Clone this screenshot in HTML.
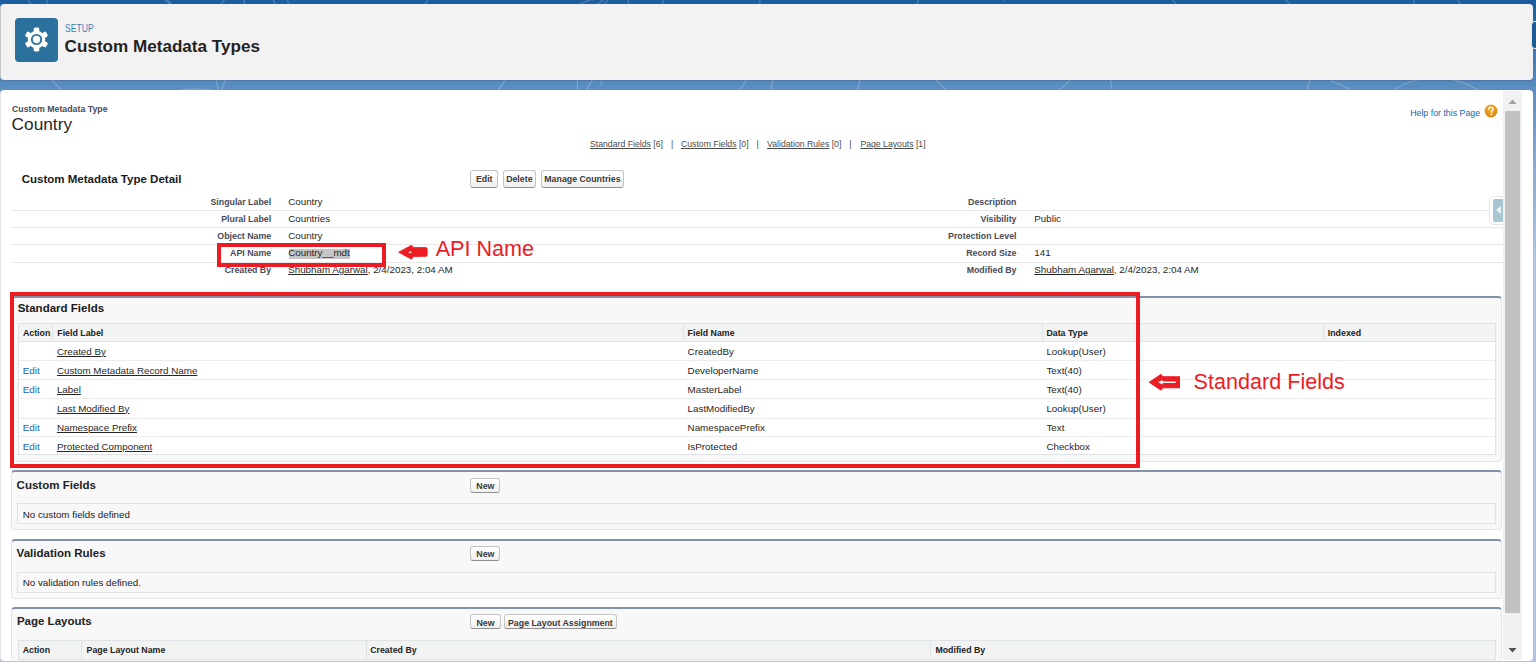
<!DOCTYPE html>
<html><head><meta charset="utf-8"><title>Custom Metadata Types</title>
<style>
html,body{margin:0;padding:0;}
body{width:1536px;height:662px;overflow:hidden;position:relative;font-family:"Liberation Sans",sans-serif;-webkit-font-smoothing:antialiased;
background:linear-gradient(to bottom,#1a5c9d 0px,#2f6cab 30px,#5b8dc0 88px,#86a9d2 160px,#b0c4df 260px,#b0c4df 662px);}
.t{position:absolute;white-space:nowrap;}
.r{position:absolute;}
u{text-decoration:underline;}
</style></head><body>
<svg class="r" style="left:0;top:0" width="1536" height="300"><g fill="none" stroke="rgba(255,255,255,0.22)" stroke-width="1.2"><path d="M572.5,5.3 A98.1,98.1 0 0 1 437.1,48.2"/><path d="M632.0,-44.9 A80.9,80.9 0 0 1 546.2,16.8"/><path d="M98.0,-117.5 A70.9,70.9 0 0 1 133.9,-72.5"/><path d="M199.9,33.6 A133.7,133.7 0 0 1 353.4,-33.4"/><path d="M1530.6,52.3 A123.0,123.0 0 0 1 1450.0,-13.6"/><path d="M194.1,113.3 A117.9,117.9 0 0 1 31.7,41.4"/><path d="M1083.4,57.2 A85.7,85.7 0 0 1 1042.5,101.0"/><path d="M261.9,176.1 A71.3,71.3 0 0 1 228.8,73.6"/><path d="M661.2,-105.4 A115.3,115.3 0 0 1 775.6,-81.1"/><path d="M881.4,-56.9 A125.0,125.0 0 0 1 1004.0,1.2"/><path d="M1570.3,-117.1 A70.2,70.2 0 0 1 1623.6,-88.8"/><path d="M765.7,-168.8 A100.2,100.2 0 0 1 854.8,-48.4"/><path d="M1308.7,-49.8 A103.4,103.4 0 0 1 1462.9,-69.8"/><path d="M571.2,177.0 A133.4,133.4 0 0 1 719.6,22.9"/><path d="M147.7,111.9 A97.7,97.7 0 0 1 -0.5,200.0"/><path d="M518.8,42.2 A100.2,100.2 0 0 1 414.8,128.1"/><path d="M230.3,-74.1 A27.1,27.1 0 0 1 249.4,-62.8"/><path d="M467.5,89.8 A124.6,124.6 0 0 1 311.4,144.7"/><path d="M934.0,77.9 A118.3,118.3 0 0 1 970.6,199.1"/><path d="M756.8,-13.0 A126.1,126.1 0 0 1 738.0,93.5"/><path d="M193.0,-10.4 A48.0,48.0 0 0 1 243.3,-63.0"/><path d="M335.7,-27.3 A70.3,70.3 0 0 1 337.3,-131.8"/><path d="M1462.0,58.3 A81.9,81.9 0 0 1 1593.7,72.7"/><path d="M118.9,91.1 A113.6,113.6 0 0 1 66.8,282.0"/><path d="M575.8,7.5 A32.4,32.4 0 0 1 597.1,-0.7"/><path d="M40.0,11.8 A39.5,39.5 0 0 1 23.5,-9.6"/><path d="M-70.7,-13.3 A32.2,32.2 0 0 1 -81.1,-30.9"/><path d="M1392.1,129.8 A37.8,37.8 0 0 1 1356.5,103.0"/><path d="M672.6,-51.3 A121.9,121.9 0 0 1 566.9,75.2"/><path d="M730.6,-29.0 A32.3,32.3 0 0 1 716.3,-59.6"/><path d="M1339.3,-41.8 A22.8,22.8 0 0 1 1323.9,-12.9"/><path d="M169.0,68.0 A23.2,23.2 0 0 1 212.2,60.8"/><path d="M1340.2,153.1 A51.3,51.3 0 0 1 1323.3,110.9"/><path d="M1169.3,168.7 A113.5,113.5 0 0 1 1110.3,74.5"/><path d="M1330.9,80.9 A122.3,122.3 0 0 1 1361.7,294.1"/><path d="M1120.3,48.3 A82.1,82.1 0 0 1 1091.3,4.1"/><path d="M-22.1,-49.5 A51.1,51.1 0 0 1 41.3,22.0"/><path d="M820.9,143.3 A138.6,138.6 0 0 1 762.0,299.5"/><path d="M326.1,25.3 A43.6,43.6 0 0 1 270.3,-13.3"/><path d="M1391.0,91.8 A77.5,77.5 0 0 1 1512.9,150.4"/><path d="M115.6,-21.6 A129.2,129.2 0 0 1 192.3,183.6"/><path d="M682.0,69.7 A114.7,114.7 0 0 1 683.5,-130.5"/><path d="M1617.6,8.3 A68.2,68.2 0 0 1 1548.5,98.8"/><path d="M262.0,-66.0 A38.1,38.1 0 0 1 232.0,-6.3"/><path d="M115.2,36.7 A137.6,137.6 0 0 1 277.8,44.5"/><path d="M876.6,-47.3 A21.7,21.7 0 0 1 853.6,-21.7"/><path d="M868.6,129.3 A72.1,72.1 0 0 1 833.9,251.9"/><path d="M301.5,45.6 A55.2,55.2 0 0 1 243.3,-14.1"/><path d="M408.1,18.1 A35.7,35.7 0 0 1 405.2,60.4"/><path d="M593.2,145.0 A128.5,128.5 0 0 1 740.6,-40.4"/><path d="M860.0,78.6 A82.8,82.8 0 0 1 779.1,151.7"/><path d="M306.5,23.4 A115.9,115.9 0 0 1 153.9,-17.4"/><path d="M1087.8,69.1 A59.1,59.1 0 0 1 1158.2,17.9"/><path d="M1244.9,36.9 A87.2,87.2 0 0 1 1165.7,-12.0"/><path d="M1229.5,-25.1 A87.4,87.4 0 0 1 1283.7,126.3"/><path d="M600.9,85.5 A80.7,80.7 0 0 1 714.3,17.9"/><path d="M768.5,41.3 A77.4,77.4 0 0 1 697.4,146.7"/><path d="M1348.6,165.2 A51.2,51.2 0 0 1 1443.8,165.0"/><path d="M1303.7,-29.3 A34.6,34.6 0 0 1 1303.8,-54.2"/><path d="M368.0,-157.6 A100.3,100.3 0 0 1 405.9,21.8"/><path d="M266.7,198.1 A99.2,99.2 0 0 1 105.7,117.2"/><path d="M1438.8,61.7 A134.3,134.3 0 0 1 1461.4,-122.5"/><path d="M1547.5,169.6 A39.4,39.4 0 0 1 1567.1,117.2"/><path d="M499.3,-82.5 A58.2,58.2 0 0 1 535.4,-77.4"/><path d="M853.3,62.7 A22.2,22.2 0 0 1 847.6,28.6"/><path d="M827.9,-196.3 A138.2,138.2 0 0 1 856.2,62.0"/><path d="M127.3,-30.0 A24.8,24.8 0 0 1 146.7,-12.4"/><path d="M217.8,-79.3 A129.4,129.4 0 0 1 293.0,31.9"/><path d="M169.2,93.2 A88.5,88.5 0 0 1 235.4,97.9"/><path d="M108.7,143.9 A71.0,71.0 0 0 1 -22.9,134.0"/></g></svg>
<div class="r" style="left:0px;top:4px;width:1533px;height:75.5px;background:#f3f2f2;border-radius:4px;border-left:1px solid #c4c4c4;box-sizing:border-box;box-shadow:0 1px 1px rgba(0,0,0,.12);"></div>
<div class="r" style="left:15px;top:18px;width:43px;height:43.5px;background:#2a729d;border-radius:4px;"></div>
<svg class="r" style="left:23.5px;top:27px" width="25" height="25" viewBox="-12.5 -12.5 25 25">
<g fill="#fff"><circle r="8.7"/>
<rect x="-2.8" y="-12" width="5.6" height="24" rx="1.6"/>
<rect x="-2.8" y="-12" width="5.6" height="24" rx="1.6" transform="rotate(60)"/>
<rect x="-2.8" y="-12" width="5.6" height="24" rx="1.6" transform="rotate(120)"/></g>
<circle r="5.6" fill="#2a729d"/><circle r="3.7" fill="#fff"/>
</svg>
<div class="t " style="left:64.60px;top:20.96px;font-size:10.8px;line-height:14px;color:#3a80ba;transform:scaleX(0.79);transform-origin:0 0;letter-spacing:0.1px;">SETUP</div>
<div class="t " style="left:64.60px;top:36.07px;font-size:17.1px;line-height:21px;font-weight:bold;color:#232323;">Custom Metadata Types</div>
<div class="r" style="left:1530.5px;top:20.5px;width:9px;height:28px;border:1.5px solid #e3e8ef;border-radius:4px;background:#1f5b93;box-sizing:border-box;"></div>
<div class="r" style="left:0px;top:90px;width:1533px;height:571px;background:#fff;border-radius:4px;border-left:1px solid #e6e6e6;box-sizing:border-box;"></div>
<div class="t " style="left:12.00px;top:104.05px;font-size:8.8px;line-height:11px;font-weight:bold;color:#4a4a56;">Custom Metadata Type</div>
<div class="t " style="left:11.60px;top:112.81px;font-size:17.28px;line-height:22px;color:#262626;">Country</div>
<div class="t " style="right:55.90px;text-align:right;top:107.95px;font-size:8.8px;line-height:11px;color:#1864b0;">Help for this Page</div>
<svg class="r" style="left:1483.5px;top:103.5px" width="14" height="14" viewBox="0 0 14 14">
<defs><radialGradient id="hg" cx="45%" cy="35%" r="65%"><stop offset="0" stop-color="#f6b23a"/><stop offset="1" stop-color="#d98208"/></radialGradient></defs>
<circle cx="7" cy="7" r="6.4" fill="url(#hg)"/>
<path d="M4.9,5.3 C4.9,3.9 5.9,3.2 7,3.2 C8.2,3.2 9.1,4 9.1,5.1 C9.1,6.3 7.6,6.6 7.5,7.9 L7.5,8.5" fill="none" stroke="#fff" stroke-width="1.3" stroke-linecap="round"/>
<circle cx="7.5" cy="10.5" r="0.9" fill="#fff"/>
</svg>
<div class="t " style="left:590.00px;top:139.19px;font-size:8.7px;line-height:11px;color:#4a4a4a;"><u>Standard Fields</u> [6]</div>
<div class="t " style="left:670.92px;top:139.19px;font-size:8.7px;line-height:11px;color:#4a4a4a;">|</div>
<div class="t " style="left:681.00px;top:139.19px;font-size:8.7px;line-height:11px;color:#4a4a4a;"><u>Custom Fields</u> [0]</div>
<div class="t " style="left:756.59px;top:139.19px;font-size:8.7px;line-height:11px;color:#4a4a4a;">|</div>
<div class="t " style="left:767.10px;top:139.19px;font-size:8.7px;line-height:11px;color:#4a4a4a;"><u>Validation Rules</u> [0]</div>
<div class="t " style="left:849.32px;top:139.19px;font-size:8.7px;line-height:11px;color:#4a4a4a;">|</div>
<div class="t " style="left:860.40px;top:139.19px;font-size:8.7px;line-height:11px;color:#4a4a4a;"><u>Page Layouts</u> [1]</div>
<div class="t " style="left:21.70px;top:171.81px;font-size:11.52px;line-height:14px;font-weight:bold;color:#1a1a1a;">Custom Metadata Type Detail</div>
<div class="r" style="left:470.20px;top:169.70px;width:28.10px;height:18.00px;border:1px solid #c4c4c4;border-bottom-color:#8f8f8f;border-radius:3px;background:linear-gradient(#ffffff,#f0f0f0);box-sizing:border-box;"></div>
<div class="t " style="left:475.94px;top:174.40px;font-size:8.8px;line-height:11px;font-weight:bold;color:#3a3a3a;">Edit</div>
<div class="r" style="left:502.60px;top:169.70px;width:33.50px;height:18.00px;border:1px solid #c4c4c4;border-bottom-color:#8f8f8f;border-radius:3px;background:linear-gradient(#ffffff,#f0f0f0);box-sizing:border-box;"></div>
<div class="t " style="left:506.14px;top:174.40px;font-size:8.8px;line-height:11px;font-weight:bold;color:#3a3a3a;">Delete</div>
<div class="r" style="left:541.30px;top:169.70px;width:82.30px;height:18.00px;border:1px solid #c4c4c4;border-bottom-color:#8f8f8f;border-radius:3px;background:linear-gradient(#ffffff,#f0f0f0);box-sizing:border-box;"></div>
<div class="t " style="left:544.31px;top:174.40px;font-size:8.8px;line-height:11px;font-weight:bold;color:#3a3a3a;">Manage Countries</div>
<div class="r" style="left:11.20px;top:210.10px;width:1491.50px;height:1.00px;background:#e7e7e7;"></div>
<div class="r" style="left:11.20px;top:227.20px;width:1491.50px;height:1.00px;background:#e7e7e7;"></div>
<div class="r" style="left:11.20px;top:244.30px;width:1491.50px;height:1.00px;background:#e7e7e7;"></div>
<div class="r" style="left:11.20px;top:261.70px;width:1491.50px;height:1.00px;background:#e7e7e7;"></div>
<div class="r" style="left:288.50px;top:248.90px;width:61.50px;height:9.80px;background:#c5c5c5;"></div>
<div class="t " style="right:1264.90px;text-align:right;top:196.55px;font-size:8.8px;line-height:11px;font-weight:bold;color:#4a4a56;">Singular Label</div>
<div class="t " style="right:519.50px;text-align:right;top:196.55px;font-size:8.8px;line-height:11px;font-weight:bold;color:#4a4a56;">Description</div>
<div class="t " style="left:288.20px;top:195.70px;font-size:9.8px;line-height:12px;color:#262626;">Country</div>
<div class="t " style="right:1264.90px;text-align:right;top:213.75px;font-size:8.8px;line-height:11px;font-weight:bold;color:#4a4a56;">Plural Label</div>
<div class="t " style="right:519.50px;text-align:right;top:213.75px;font-size:8.8px;line-height:11px;font-weight:bold;color:#4a4a56;">Visibility</div>
<div class="t " style="left:288.20px;top:212.90px;font-size:9.8px;line-height:12px;color:#262626;">Countries</div>
<div class="t " style="left:1034.30px;top:212.90px;font-size:9.8px;line-height:12px;color:#262626;">Public</div>
<div class="t " style="right:1264.90px;text-align:right;top:230.85px;font-size:8.8px;line-height:11px;font-weight:bold;color:#4a4a56;">Object Name</div>
<div class="t " style="right:519.50px;text-align:right;top:230.85px;font-size:8.8px;line-height:11px;font-weight:bold;color:#4a4a56;">Protection Level</div>
<div class="t " style="left:288.20px;top:230.00px;font-size:9.8px;line-height:12px;color:#262626;">Country</div>
<div class="t " style="right:1264.90px;text-align:right;top:247.75px;font-size:8.8px;line-height:11px;font-weight:bold;color:#4a4a56;">API Name</div>
<div class="t " style="right:519.50px;text-align:right;top:247.75px;font-size:8.8px;line-height:11px;font-weight:bold;color:#4a4a56;">Record Size</div>
<div class="t " style="left:288.20px;top:246.90px;font-size:9.8px;line-height:12px;color:#262626;">Country__mdt</div>
<div class="t " style="left:1034.30px;top:246.90px;font-size:9.8px;line-height:12px;color:#262626;">141</div>
<div class="t " style="right:1264.90px;text-align:right;top:264.65px;font-size:8.8px;line-height:11px;font-weight:bold;color:#4a4a56;">Created By</div>
<div class="t " style="right:519.50px;text-align:right;top:264.65px;font-size:8.8px;line-height:11px;font-weight:bold;color:#4a4a56;">Modified By</div>
<div class="t " style="left:288.20px;top:263.80px;font-size:9.8px;line-height:12px;color:#262626;"><u>Shubham Agarwal</u>, 2/4/2023, 2:04 AM</div>
<div class="t " style="left:1034.30px;top:263.80px;font-size:9.8px;line-height:12px;color:#262626;"><u>Shubham Agarwal</u>, 2/4/2023, 2:04 AM</div>
<div class="r" style="left:1489px;top:195.5px;width:16px;height:29px;background:#fff;border:1px solid #e3e6ea;border-radius:5px 0 0 5px;box-sizing:border-box;"></div>
<div class="r" style="left:1493px;top:199px;width:10px;height:23px;background:#a7c6d3;border-radius:2px 0 0 2px;"></div>
<svg class="r" style="left:1495px;top:205px" width="8" height="10"><path d="M1,5 L6,1 L6,9 Z" fill="#eef4f7"/></svg>
<div class="r" style="left:11.3px;top:296.00px;width:1490.70px;height:166.20px;background:#f8f8f8;border:1px solid #e4e4e4;border-top:2px solid #8391ab;border-radius:4px;box-sizing:border-box;"></div>
<div class="t " style="left:17.70px;top:300.81px;font-size:11.52px;line-height:14px;font-weight:bold;color:#1a1a1a;">Standard Fields</div>
<div class="r" style="left:18.00px;top:323.00px;width:1478.00px;height:131.90px;background:#fff;border:1px solid #e0e3e5;box-sizing:border-box;"></div>
<div class="r" style="left:18.00px;top:323.00px;width:1478.00px;height:19.20px;background:#f2f3f3;border:1px solid #e0e3e5;box-sizing:border-box;"></div>
<div class="r" style="left:52.20px;top:324.00px;width:1.00px;height:17.20px;background:#e0e3e5;"></div>
<div class="r" style="left:682.60px;top:324.00px;width:1.00px;height:17.20px;background:#e0e3e5;"></div>
<div class="r" style="left:1041.50px;top:324.00px;width:1.00px;height:17.20px;background:#e0e3e5;"></div>
<div class="r" style="left:1322.60px;top:324.00px;width:1.00px;height:17.20px;background:#e0e3e5;"></div>
<div class="t " style="left:22.90px;top:328.05px;font-size:8.8px;line-height:11px;font-weight:bold;color:#222;">Action</div>
<div class="t " style="left:57.30px;top:328.05px;font-size:8.8px;line-height:11px;font-weight:bold;color:#222;">Field Label</div>
<div class="t " style="left:687.60px;top:328.05px;font-size:8.8px;line-height:11px;font-weight:bold;color:#222;">Field Name</div>
<div class="t " style="left:1046.40px;top:328.05px;font-size:8.8px;line-height:11px;font-weight:bold;color:#222;">Data Type</div>
<div class="t " style="left:1327.80px;top:328.05px;font-size:8.8px;line-height:11px;font-weight:bold;color:#222;">Indexed</div>
<div class="r" style="left:19.00px;top:360.20px;width:1476.00px;height:1.00px;background:#ececec;"></div>
<div class="r" style="left:19.00px;top:379.40px;width:1476.00px;height:1.00px;background:#ececec;"></div>
<div class="r" style="left:19.00px;top:398.40px;width:1476.00px;height:1.00px;background:#ececec;"></div>
<div class="r" style="left:19.00px;top:417.60px;width:1476.00px;height:1.00px;background:#ececec;"></div>
<div class="r" style="left:19.00px;top:436.40px;width:1476.00px;height:1.00px;background:#ececec;"></div>
<div class="t " style="left:56.90px;top:345.60px;font-size:9.8px;line-height:12px;color:#262626;"><u>Created By</u></div>
<div class="t " style="left:687.60px;top:345.60px;font-size:9.8px;line-height:12px;color:#262626;">CreatedBy</div>
<div class="t " style="left:1046.40px;top:345.60px;font-size:9.8px;line-height:12px;color:#262626;">Lookup(User)</div>
<div class="t " style="left:22.80px;top:365.20px;font-size:9.8px;line-height:12px;color:#1864b0;">Edit</div>
<div class="t " style="left:56.90px;top:365.20px;font-size:9.8px;line-height:12px;color:#262626;"><u>Custom Metadata Record Name</u></div>
<div class="t " style="left:687.60px;top:365.20px;font-size:9.8px;line-height:12px;color:#262626;">DeveloperName</div>
<div class="t " style="left:1046.40px;top:365.20px;font-size:9.8px;line-height:12px;color:#262626;">Text(40)</div>
<div class="t " style="left:22.80px;top:384.00px;font-size:9.8px;line-height:12px;color:#1864b0;">Edit</div>
<div class="t " style="left:56.90px;top:384.00px;font-size:9.8px;line-height:12px;color:#262626;"><u>Label</u></div>
<div class="t " style="left:687.60px;top:384.00px;font-size:9.8px;line-height:12px;color:#262626;">MasterLabel</div>
<div class="t " style="left:1046.40px;top:384.00px;font-size:9.8px;line-height:12px;color:#262626;">Text(40)</div>
<div class="t " style="left:56.90px;top:402.50px;font-size:9.8px;line-height:12px;color:#262626;"><u>Last Modified By</u></div>
<div class="t " style="left:687.60px;top:402.50px;font-size:9.8px;line-height:12px;color:#262626;">LastModifiedBy</div>
<div class="t " style="left:1046.40px;top:402.50px;font-size:9.8px;line-height:12px;color:#262626;">Lookup(User)</div>
<div class="t " style="left:22.80px;top:421.90px;font-size:9.8px;line-height:12px;color:#1864b0;">Edit</div>
<div class="t " style="left:56.90px;top:421.90px;font-size:9.8px;line-height:12px;color:#262626;"><u>Namespace Prefix</u></div>
<div class="t " style="left:687.60px;top:421.90px;font-size:9.8px;line-height:12px;color:#262626;">NamespacePrefix</div>
<div class="t " style="left:1046.40px;top:421.90px;font-size:9.8px;line-height:12px;color:#262626;">Text</div>
<div class="t " style="left:22.80px;top:441.00px;font-size:9.8px;line-height:12px;color:#1864b0;">Edit</div>
<div class="t " style="left:56.90px;top:441.00px;font-size:9.8px;line-height:12px;color:#262626;"><u>Protected Component</u></div>
<div class="t " style="left:687.60px;top:441.00px;font-size:9.8px;line-height:12px;color:#262626;">IsProtected</div>
<div class="t " style="left:1046.40px;top:441.00px;font-size:9.8px;line-height:12px;color:#262626;">Checkbox</div>
<div class="r" style="left:11.3px;top:470.30px;width:1490.70px;height:59.90px;background:#f8f8f8;border:1px solid #e4e4e4;border-top:2px solid #8391ab;border-radius:4px;box-sizing:border-box;"></div>
<div class="t " style="left:16.60px;top:477.71px;font-size:11.52px;line-height:14px;font-weight:bold;color:#222;">Custom Fields</div>
<div class="r" style="left:470.40px;top:477.70px;width:29.90px;height:15.00px;border:1px solid #c4c4c4;border-bottom-color:#8f8f8f;border-radius:3px;background:linear-gradient(#ffffff,#f0f0f0);box-sizing:border-box;"></div>
<div class="t " style="left:476.30px;top:480.90px;font-size:8.8px;line-height:11px;font-weight:bold;color:#3a3a3a;">New</div>
<div class="r" style="left:17.40px;top:503.40px;width:1478.60px;height:20.90px;background:#f8f8f8;border:1px solid #e0e3e5;box-sizing:border-box;"></div>
<div class="t " style="left:22.70px;top:508.80px;font-size:9.8px;line-height:12px;color:#222;">No custom fields defined</div>
<div class="r" style="left:11.3px;top:538.70px;width:1490.70px;height:59.90px;background:#f8f8f8;border:1px solid #e4e4e4;border-top:2px solid #8391ab;border-radius:4px;box-sizing:border-box;"></div>
<div class="t " style="left:16.60px;top:546.11px;font-size:11.52px;line-height:14px;font-weight:bold;color:#222;">Validation Rules</div>
<div class="r" style="left:470.40px;top:546.10px;width:29.90px;height:15.00px;border:1px solid #c4c4c4;border-bottom-color:#8f8f8f;border-radius:3px;background:linear-gradient(#ffffff,#f0f0f0);box-sizing:border-box;"></div>
<div class="t " style="left:476.30px;top:549.30px;font-size:8.8px;line-height:11px;font-weight:bold;color:#3a3a3a;">New</div>
<div class="r" style="left:17.40px;top:571.80px;width:1478.60px;height:20.90px;background:#f8f8f8;border:1px solid #e0e3e5;box-sizing:border-box;"></div>
<div class="t " style="left:22.70px;top:577.20px;font-size:9.8px;line-height:12px;color:#222;">No validation rules defined.</div>
<div class="r" style="left:11.3px;top:606.80px;width:1490.70px;height:54.20px;background:#f8f8f8;border:1px solid #e4e4e4;border-top:2px solid #8391ab;border-bottom:none;border-radius:4px;box-sizing:border-box;"></div>
<div class="t " style="left:16.90px;top:613.91px;font-size:11.52px;line-height:14px;font-weight:bold;color:#222;">Page Layouts</div>
<div class="r" style="left:470.40px;top:614.30px;width:30.20px;height:15.20px;border:1px solid #c4c4c4;border-bottom-color:#8f8f8f;border-radius:3px;background:linear-gradient(#ffffff,#f0f0f0);box-sizing:border-box;"></div>
<div class="t " style="left:476.45px;top:617.60px;font-size:8.8px;line-height:11px;font-weight:bold;color:#3a3a3a;">New</div>
<div class="r" style="left:504.20px;top:614.30px;width:112.40px;height:15.20px;border:1px solid #c4c4c4;border-bottom-color:#8f8f8f;border-radius:3px;background:linear-gradient(#ffffff,#f0f0f0);box-sizing:border-box;"></div>
<div class="t " style="left:508.00px;top:617.60px;font-size:8.8px;line-height:11px;font-weight:bold;color:#3a3a3a;">Page Layout Assignment</div>
<div class="r" style="left:18.00px;top:640.40px;width:1478.00px;height:19.60px;background:#f2f3f3;border:1px solid #e0e3e5;border-bottom:none;box-sizing:border-box;"></div>
<div class="r" style="left:18.00px;top:659.10px;width:1478.00px;height:1.00px;background:#e0e3e5;"></div>
<div class="r" style="left:81.40px;top:641.40px;width:1.00px;height:17.70px;background:#e0e3e5;"></div>
<div class="r" style="left:365.50px;top:641.40px;width:1.00px;height:17.70px;background:#e0e3e5;"></div>
<div class="r" style="left:929.70px;top:641.40px;width:1.00px;height:17.70px;background:#e0e3e5;"></div>
<div class="t " style="left:22.70px;top:645.25px;font-size:8.8px;line-height:11px;font-weight:bold;color:#222;">Action</div>
<div class="t " style="left:86.60px;top:645.25px;font-size:8.8px;line-height:11px;font-weight:bold;color:#222;">Page Layout Name</div>
<div class="t " style="left:370.20px;top:645.25px;font-size:8.8px;line-height:11px;font-weight:bold;color:#222;">Created By</div>
<div class="t " style="left:935.40px;top:645.25px;font-size:8.8px;line-height:11px;font-weight:bold;color:#222;">Modified By</div>
<div class="r" style="left:216.9px;top:243.2px;width:169.5px;height:23.5px;border:4.6px solid #ec1c24;box-sizing:border-box;"></div>
<div class="r" style="left:10px;top:292.1px;width:1129.5px;height:175.5px;border:4.9px solid #ec1c24;box-sizing:border-box;"></div>
<svg class="r" style="left:396px;top:243px" width="34" height="19" viewBox="396 243 34 19">
<path d="M398.6,252.2 L411.5,245.2 L413.5,247.4 L426.2,247.6 Q427.2,248 427.2,249 L427.2,255.5 Q427.2,256.3 426.2,256.3 L413.5,256.6 L411.5,259.2 Z" fill="#ec1c24" stroke="#ec1c24" stroke-width="0.8" stroke-linejoin="round"/>
<path d="M408.2,252.2 L411.2,251 L411.2,253.4 Z" fill="#fff"/>
</svg>
<svg class="r" style="left:1148.70px;top:374.20px" width="31.20" height="16.50" viewBox="0 0 31 17" preserveAspectRatio="none">
<path d="M0.5,8.5 L12,0.5 L13.5,2.8 L31,2.8 L31,14.2 L13.5,14.2 L12,16.5 Z" fill="#ec1c24" stroke="#ec1c24" stroke-width="1" stroke-linejoin="round"/>
<path d="M9,8.5 L13.5,6.2 L13.5,7.7 L26.5,7.7 L26.5,9.3 L13.5,9.3 L13.5,10.8 Z" fill="#fff"/>
</svg>
<div class="t " style="left:435.70px;top:234.72px;font-size:21.6px;line-height:27px;color:#ec1c24;">API Name</div>
<div class="t " style="left:1193.60px;top:367.52px;font-size:21.6px;line-height:27px;color:#ec1c24;">Standard Fields</div>
<div class="r" style="left:1503.00px;top:91.00px;width:19.00px;height:569.00px;background:#f1f1f1;"></div>
<div class="r" style="left:1504.90px;top:110.70px;width:15.10px;height:502.20px;background:#c1c1c1;"></div>
<svg class="r" style="left:1508px;top:98px" width="9" height="7"><path d="M0.5,6 L4.5,1.5 L8.5,6 Z" fill="#a3a3a3"/></svg>
<svg class="r" style="left:1508px;top:647px" width="9" height="7"><path d="M0.5,1 L4.5,5.5 L8.5,1 Z" fill="#505050"/></svg>
</body></html>
